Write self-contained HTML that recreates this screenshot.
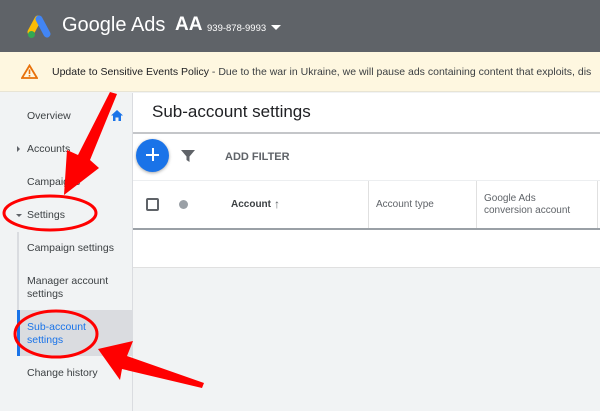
<!DOCTYPE html>
<html><head><meta charset="utf-8"><style>
*{margin:0;padding:0;box-sizing:border-box}
body{width:600px;height:411px;overflow:hidden;position:relative;font-family:"Liberation Sans",sans-serif;background:#f1f3f4}
.a{position:absolute}
</style></head><body>
<div class="a" style="left:0;top:0;width:600px;height:52px;background:#5f6368"></div>
<svg class="a" style="left:27px;top:15px" width="26" height="24" viewBox="0 0 26 24">
<path d="M11 4 L4 17" stroke="#fbbc04" stroke-width="7" stroke-linecap="round"/>
<path d="M12 4 L20 19" stroke="#4285f4" stroke-width="7" stroke-linecap="round"/>
<circle cx="4.5" cy="19.5" r="3.5" fill="#34a853"/>
</svg>
<div class="a" style="left:62px;top:14px;color:#fff;font-size:20px">Google Ads</div>
<div class="a" style="left:175px;top:14px;color:#fff;font-size:19px;font-weight:bold">AA</div>
<div class="a" style="left:207px;top:23px;color:#fff;font-size:9.5px">939-878-9993</div>
<div class="a" style="left:271px;top:25px;width:0;height:0;border-left:5px solid transparent;border-right:5px solid transparent;border-top:5px solid #fff"></div>
<div class="a" style="left:0;top:52px;width:600px;height:40px;background:#fef7e0;border-bottom:1px solid #e8e4d4"></div>
<svg class="a" style="left:21px;top:64px" width="17" height="15" viewBox="0 0 17 15"><path d="M8.5 1.5 L16 14 H1 Z" fill="none" stroke="#e8710a" stroke-width="1.8"/><rect x="7.7" y="5.5" width="1.6" height="4.5" fill="#e8710a"/><rect x="7.7" y="11" width="1.6" height="1.6" fill="#e8710a"/></svg>
<div class="a" style="left:52px;top:66px;font-size:10.5px;color:#3c4043;white-space:nowrap"><b style="font-weight:normal;color:#202124">Update to Sensitive Events Policy</b> - Due to the war in Ukraine, we will pause ads containing content that exploits, dis</div>
<div class="a" style="left:132px;top:93px;width:1px;height:318px;background:#dadce0"></div>
<div class="a" style="left:133px;top:93px;width:467px;height:175px;background:#fff"></div>
<div class="a" style="left:152px;top:102px;font-size:17px;color:#202124">Sub-account settings</div>
<div class="a" style="left:133px;top:132px;width:467px;height:2px;background:#c4c6c9"></div>
<div class="a" style="left:136px;top:139px;width:33px;height:33px;border-radius:50%;background:#1a73e8;box-shadow:0 1px 3px rgba(0,0,0,.35)"></div>
<div class="a" style="left:151.5px;top:148px;width:2px;height:13px;background:#fff"></div>
<div class="a" style="left:146px;top:153.5px;width:13px;height:2px;background:#fff"></div>
<svg class="a" style="left:181px;top:149px" width="14" height="14" viewBox="0 0 14 14"><path d="M0 1 H14 L8.5 7.5 V13 L5.5 11 V7.5 Z" fill="#5f6368"/></svg>
<div class="a" style="left:225px;top:151px;font-size:11px;color:#5f6368;font-weight:bold">ADD FILTER</div>
<div class="a" style="left:133px;top:180px;width:467px;height:1px;background:#eceef0"></div>
<div class="a" style="left:146px;top:198px;width:13px;height:13px;border:2px solid #5f6368;border-radius:2px"></div>
<div class="a" style="left:179px;top:200px;width:9px;height:9px;border-radius:50%;background:#9aa0a6"></div>
<div class="a" style="left:231px;top:199px;font-size:10px;color:#3c4043;font-weight:bold">Account</div>
<div class="a" style="left:274px;top:197px;font-size:12px;color:#5f6368">↑</div>
<div class="a" style="left:368px;top:181px;width:1px;height:47px;background:#e0e0e0"></div>
<div class="a" style="left:476px;top:181px;width:1px;height:47px;background:#e0e0e0"></div>
<div class="a" style="left:597px;top:181px;width:1px;height:47px;background:#e0e0e0"></div>
<div class="a" style="left:376px;top:199px;font-size:10px;color:#5f6368">Account type</div>
<div class="a" style="left:484px;top:193px;font-size:10px;color:#5f6368;line-height:12px">Google Ads<br>conversion account</div>
<div class="a" style="left:133px;top:228px;width:467px;height:2px;background:#9aa0a6"></div>
<div class="a" style="left:133px;top:267px;width:467px;height:1px;background:#e0e0e0"></div>
<div class="a" style="left:27px;top:110px;font-size:10.5px;color:#3c4043">Overview</div>
<svg class="a" style="left:111px;top:110px" width="12" height="11" viewBox="0 0 12 11"><path d="M6 0 L12 5.5 H10 V11 H7.5 V7.5 H4.5 V11 H2 V5.5 H0 Z" fill="#1a73e8"/></svg>
<div class="a" style="left:17px;top:146px;width:0;height:0;border-top:3px solid transparent;border-bottom:3px solid transparent;border-left:3px solid #5f6368"></div>
<div class="a" style="left:27px;top:143px;font-size:10.5px;color:#3c4043">Accounts</div>
<div class="a" style="left:27px;top:176px;font-size:10.5px;color:#3c4043">Campaigns</div>
<div class="a" style="left:16px;top:214px;width:0;height:0;border-left:3px solid transparent;border-right:3px solid transparent;border-top:3px solid #5f6368"></div>
<div class="a" style="left:27px;top:209px;font-size:10.5px;color:#3c4043">Settings</div>
<div class="a" style="left:17px;top:232px;width:2px;height:124px;background:#dadce0"></div>
<div class="a" style="left:27px;top:242px;font-size:10.5px;color:#3c4043">Campaign settings</div>
<div class="a" style="left:27px;top:275px;font-size:10.5px;color:#3c4043;line-height:13px">Manager account<br>settings</div>
<div class="a" style="left:17px;top:310px;width:115px;height:46px;background:#dadce0"></div>
<div class="a" style="left:17px;top:310px;width:3px;height:46px;background:#1a73e8"></div>
<div class="a" style="left:27px;top:321px;font-size:10.5px;color:#1a73e8;line-height:13px">Sub-account<br>settings</div>
<div class="a" style="left:27px;top:367px;font-size:10.5px;color:#3c4043">Change history</div>
<svg class="a" style="left:0;top:0" width="600" height="411">
<polygon points="117,94 90,160 99,168 64,195 67,150 78,155 110,92" fill="#f00"/>
<ellipse cx="50" cy="213" rx="46" ry="17" fill="none" stroke="#f00" stroke-width="3"/>
<ellipse cx="56" cy="334" rx="41" ry="23" fill="none" stroke="#f00" stroke-width="3"/>
<polygon points="98,349 133,341 127,356 204,383 202,388 122,369 120,380" fill="#f00"/>
</svg>
</body></html>
